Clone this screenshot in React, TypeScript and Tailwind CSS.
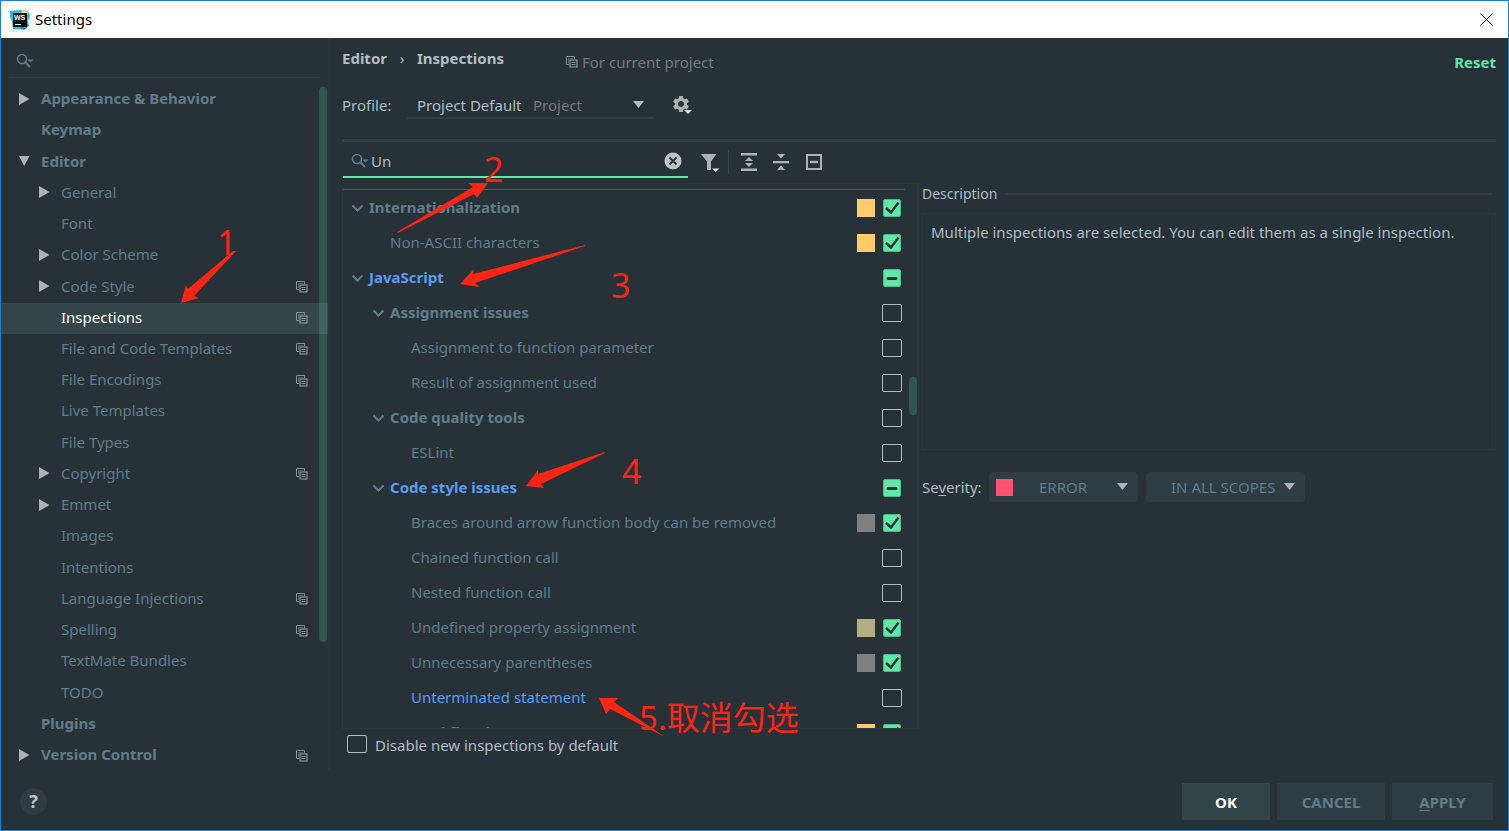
import { MdSettings } from "react-icons/md";

interface TreeItem {
  label: string;
  level: 0 | 1;
  arrow?: "open" | "closed";
  shared?: boolean;
  selected?: boolean;
}

interface Inspection {
  label: string;
  depth: 0 | 1 | 2;
  group?: boolean;
  changed?: boolean;
  swatch?: "warning" | "weak" | "info";
  state: "on" | "off" | "mixed";
}

const tree: TreeItem[] = [
  { label: "Appearance & Behavior", level: 0, arrow: "closed" },
  { label: "Keymap", level: 0 },
  { label: "Editor", level: 0, arrow: "open" },
  { label: "General", level: 1, arrow: "closed" },
  { label: "Font", level: 1 },
  { label: "Color Scheme", level: 1, arrow: "closed" },
  { label: "Code Style", level: 1, arrow: "closed", shared: true },
  { label: "Inspections", level: 1, shared: true, selected: true },
  { label: "File and Code Templates", level: 1, shared: true },
  { label: "File Encodings", level: 1, shared: true },
  { label: "Live Templates", level: 1 },
  { label: "File Types", level: 1 },
  { label: "Copyright", level: 1, arrow: "closed", shared: true },
  { label: "Emmet", level: 1, arrow: "closed" },
  { label: "Images", level: 1 },
  { label: "Intentions", level: 1 },
  { label: "Language Injections", level: 1, shared: true },
  { label: "Spelling", level: 1, shared: true },
  { label: "TextMate Bundles", level: 1 },
  { label: "TODO", level: 1 },
  { label: "Plugins", level: 0 },
  { label: "Version Control", level: 0, arrow: "closed", shared: true },
];

const inspections: Inspection[] = [
  { label: "Internationalization", depth: 0, group: true, swatch: "warning", state: "on" },
  { label: "Non-ASCII characters", depth: 1, swatch: "warning", state: "on" },
  { label: "JavaScript", depth: 0, group: true, changed: true, state: "mixed" },
  { label: "Assignment issues", depth: 1, group: true, state: "off" },
  { label: "Assignment to function parameter", depth: 2, state: "off" },
  { label: "Result of assignment used", depth: 2, state: "off" },
  { label: "Code quality tools", depth: 1, group: true, state: "off" },
  { label: "ESLint", depth: 2, state: "off" },
  { label: "Code style issues", depth: 1, group: true, changed: true, state: "mixed" },
  { label: "Braces around arrow function body can be removed", depth: 2, swatch: "info", state: "on" },
  { label: "Chained function call", depth: 2, state: "off" },
  { label: "Nested function call", depth: 2, state: "off" },
  { label: "Undefined property assignment", depth: 2, swatch: "weak", state: "on" },
  { label: "Unnecessary parentheses", depth: 2, swatch: "info", state: "on" },
  { label: "Unterminated statement", depth: 2, changed: true, state: "off" },
  { label: "Control flow issues", depth: 1, group: true, swatch: "warning", state: "on" },
];

const swatchColors = {
  warning: "bg-[#ffcb6b]",
  weak: "bg-[#b3ae80]",
  info: "bg-[#808080]",
};

const depthPadding = {
  0: "pl-[9px]",
  1: "pl-[30px]",
  2: "pl-[51px]",
};

function WebStormLogo() {
  return (
    <svg className="h-5 w-5" viewBox="0 0 20 20" aria-hidden="true">
      <path d="M0 1l10-1 9 2 1 5-2 4 1 5-5 1-1 3-5-1-5 0-1-7-2-5z" fill="#1cc4e4" />
      <path d="M14 12l5 3-2 3-3 2-4-2z" fill="#1887d2" />
      <path d="M11 3l2-3 6 1-2 4z" fill="#f2e43c" />
      <rect x="3" y="3" width="14" height="14" fill="#0b0f12" />
      <text x="4" y="10" fill="#fff" fontSize="7" fontWeight="700" fontFamily="Liberation Sans, sans-serif">
        WS
      </text>
      <rect x="5" y="14" width="6" height="1" fill="#fff" />
    </svg>
  );
}

function CopyIcon() {
  return (
    <svg className="h-3 w-3 shrink-0" viewBox="0 0 12 12" fill="none" stroke="currentColor" aria-hidden="true">
      <path d="M3 8.500H.5v-8h8V3" />
      <path d="M2.500 7V2.500H7" opacity="0.450" />
      <rect x="4" y="4" width="7" height="7" strokeWidth="1.200" />
      <path d="M5.500 6.500h4M5.500 8.500h4" />
    </svg>
  );
}

function SearchIcon() {
  return (
    <svg className="h-4 w-[18px] shrink-0" viewBox="0 0 18 16" fill="none" aria-hidden="true">
      <circle cx="6" cy="6" r="4.500" stroke="#607d8b" strokeWidth="1.600" />
      <path d="M9.300 9.300l4.700 4.700" stroke="#607d8b" strokeWidth="2" />
      <path d="M11.500 6.500h6l-3 3z" fill="#607d8b" />
    </svg>
  );
}

function DownTriangle() {
  return (
    <svg className="pointer-events-none h-2 w-3 shrink-0" viewBox="0 0 12 8" aria-hidden="true">
      <path d="M0 0h11L5.500 7z" fill="currentColor" />
    </svg>
  );
}

function TreeArrow({ open }: { open: boolean }) {
  return (
    <svg className="h-3 w-3 shrink-0" viewBox="0 0 12 12" fill="#afb1b3" aria-hidden="true">
      {open ? <path d="M0 1h10.500L5.200 11z" /> : <path d="M0 0l10.500 6L0 12z" />}
    </svg>
  );
}

function Checkbox({ id, state }: { id: string; state: Inspection["state"] }) {
  return (
    <span className="grid shrink-0 place-items-center">
      <input
        id={id}
        type="checkbox"
        defaultChecked={state === "on"}
        ref={(el) => {
          if (el) el.indeterminate = state === "mixed";
        }}
        className="col-start-1 row-start-1 h-[18px] w-5 appearance-none rounded-[2px] border border-[#b0bec5] checked:w-[18px] checked:border-[#4fb988] checked:bg-[#5fe9a6] indeterminate:w-[18px] indeterminate:border-[#4fb988] indeterminate:bg-[#5fe9a6]"
      />
      {state !== "off" && (
        <svg
          className="pointer-events-none col-start-1 row-start-1 h-[18px] w-[18px]"
          viewBox="0 0 18 18"
          fill="none"
          stroke="#263238"
          aria-hidden="true"
        >
          {state === "on" ? (
            <path d="M3 9l5 4.500 7.500-10" strokeWidth="2.500" />
          ) : (
            <path d="M5 9.500h8" strokeWidth="3" strokeLinecap="round" />
          )}
        </svg>
      )}
    </span>
  );
}

function Sidebar() {
  return (
    <aside className="relative flex w-[329px] shrink-0 flex-col border-r-2 border-[#2a373e]">
      <label className="ml-2 mr-2 flex h-10 items-center border-b border-[#2e3c43] pl-[7px] pt-[6px]">
        <SearchIcon />
        <input aria-label="Search settings" className="min-w-0 flex-1 bg-transparent outline-none" />
      </label>
      <ul className="mt-[6px] flex min-h-0 flex-1 flex-col">
        {tree.map((item) => (
          <li key={item.label} className="min-h-0 flex-1">
            <button
              type="button"
              className={`flex h-full w-full items-center pr-5 text-left ${
                item.level === 0 ? "pl-[18px] font-bold" : "pl-[38px]"
              } ${item.selected ? "bg-[#35464b] text-white" : "text-[#607d8b]"}`}
            >
              <span className="flex w-[22px] shrink-0 pb-[2px]">
                {item.arrow && <TreeArrow open={item.arrow === "open"} />}
              </span>
              <span className="flex-1 whitespace-nowrap pb-[3px]">{item.label}</span>
              {item.shared && (
                <span className="text-[#87939a]">
                  <CopyIcon />
                </span>
              )}
            </button>
          </li>
        ))}
      </ul>
      <div className="absolute right-px top-[49px] h-[555px] w-2 rounded-full bg-[#5fe9a6]/20" />
    </aside>
  );
}

function Toolbar() {
  return (
    <div className="mb-px flex h-10 shrink-0 items-center text-[#afb1b3]">
      <div className="ml-px flex h-8 w-[345px] items-center border-b-2 border-[#5fe9a6] pl-2 pr-[6px]">
        <SearchIcon />
        <input
          aria-label="Search inspections"
          defaultValue="Un"
          className="min-w-0 flex-1 bg-transparent pl-[2px] text-[#b0bec5] outline-none"
        />
        <button type="button" aria-label="Clear search">
          <svg className="h-[18px] w-[18px]" viewBox="0 0 18 18" aria-hidden="true">
            <circle cx="9" cy="9" r="8.500" fill="#c0c2c3" />
            <path d="M5.500 5.500l7 7m0-7l-7 7" stroke="#263238" strokeWidth="1.800" />
          </svg>
        </button>
      </div>
      <button type="button" aria-label="Filter" className="ml-[13px]">
        <svg className="h-5 w-5" viewBox="0 0 20 20" fill="currentColor" aria-hidden="true">
          <path d="M0 2h15.500L10 9.500V18H6V9.500z" />
          <path d="M11 16.500h7.500L14.700 20z" fill="#e0e0e0" />
        </svg>
      </button>
      <div className="ml-[7px] h-6 w-px bg-[#37474f]" />
      <button type="button" aria-label="Expand all" className="ml-3">
        <svg className="h-[18px] w-4" viewBox="0 0 16 18" fill="currentColor" aria-hidden="true">
          <path d="M0 0h16v2.500H0zM0 15.500h16V18H0zM8 4l4 4H4zM8 14l-4-4h8z" />
        </svg>
      </button>
      <button type="button" aria-label="Collapse all" className="ml-4">
        <svg className="h-[18px] w-4" viewBox="0 0 16 18" fill="currentColor" aria-hidden="true">
          <path d="M0 8h16v2.300H0zM4 1h8L8 5.500zM8 12.500l4 4.500H4z" />
        </svg>
      </button>
      <button type="button" aria-label="Reset to empty" className="ml-[17px]">
        <svg className="h-4 w-4" viewBox="0 0 16 16" fill="none" stroke="currentColor" aria-hidden="true">
          <path d="M1 1h14v14H1z" strokeWidth="2" />
          <path d="M4 8h8" strokeWidth="2.400" />
        </svg>
      </button>
    </div>
  );
}

function InspectionRow({ item }: { item: Inspection }) {
  const id = item.label.toLowerCase().replaceAll(" ", "-");

  return (
    <li className={`flex h-[35px] items-center pr-[15px] ${depthPadding[item.depth]}`}>
      <span className="flex w-[17px] shrink-0">
        {item.group && (
          <svg className="h-3 w-3" viewBox="0 0 12 12" fill="none" stroke="#607d8b" strokeWidth="2" aria-hidden="true">
            <path d="M.5 3.500l5 5 5-5" />
          </svg>
        )}
      </span>
      <label
        htmlFor={id}
        className={`flex-1 whitespace-nowrap pb-[2px] ${item.group ? "font-bold" : ""} ${
          item.changed ? "text-[#589df6]" : "text-[#607d8b]"
        }`}
      >
        {item.label}
      </label>
      {item.swatch && <span className={`mr-[7px] h-[18px] w-[18px] ${swatchColors[item.swatch]}`} />}
      <span className="flex w-5 justify-center">
        <Checkbox id={id} state={item.state} />
      </span>
    </li>
  );
}

function InspectionList() {
  return (
    <div className="relative w-1/2 shrink-0 overflow-hidden border border-r-2 border-[#2a373e]">
      <div className="mr-3 mt-[5px] h-px bg-[#455a64]" />
      <ul>
        {inspections.map((item) => (
          <InspectionRow key={item.label} item={item} />
        ))}
      </ul>
      <div className="absolute right-0 top-[193px] h-[38px] w-2 rounded-full bg-[#5fe9a6]/20" />
    </div>
  );
}

function DetailsPanel() {
  return (
    <section className="flex min-w-0 flex-1 flex-col pl-[3px]">
      <div className="flex h-[22px] items-center gap-2 pr-1">
        <h2 className="text-sm text-[#b0bec5]">Description</h2>
        <div className="h-[2px] flex-1 bg-[#2e3c43]" />
      </div>
      <div className="mt-2 h-[237px] border border-[#2a373e] px-2 py-[7px] text-[#b0bec5]">
        Multiple inspections are selected. You can edit them as a single inspection.
      </div>
      <div className="mt-[22px] flex items-center text-[#607d8b]">
        <label htmlFor="severity" className="w-[67px] text-[#b0bec5]">
          Se<span className="underline underline-offset-2">v</span>erity:
        </label>
        <div className="flex h-[30px] w-[149px] items-center rounded-sm bg-[#2e3c43] pl-[7px] pr-[9px] text-[#afb1b3]">
          <span className="h-[17px] w-[17px] bg-[#ff5370]" />
          <select id="severity" className="ml-[26px] min-w-0 flex-1 appearance-none bg-transparent text-[#607d8b] outline-none">
            <option>ERROR</option>
          </select>
          <DownTriangle />
        </div>
        <div className="ml-2 flex h-[30px] w-[159px] items-center rounded-sm bg-[#2e3c43] pl-[25px] pr-[9px] text-[#afb1b3]">
          <select aria-label="Scope" className="min-w-0 flex-1 appearance-none bg-transparent text-[#607d8b] outline-none">
            <option>IN ALL SCOPES</option>
          </select>
          <DownTriangle />
        </div>
      </div>
    </section>
  );
}

function Footer() {
  return (
    <footer className="flex h-[59px] shrink-0 items-center gap-[7px] pl-[19px] pr-[15px] pt-[2px] font-bold">
      <button
        type="button"
        aria-label="Help"
        className="mr-auto h-[27px] w-[27px] rounded-full bg-[#2e3c43] text-lg leading-[27px] text-[#c0c2c3]"
      >
        ?
      </button>
      <button type="button" className="h-[37px] w-[88px] bg-[#314549] text-white">
        OK
      </button>
      <button type="button" className="h-[37px] w-[108px] bg-[#2e3c43] text-[#607d8b]">
        CANCEL
      </button>
      <button type="button" className="h-[37px] w-[101px] bg-[#2e3c43] text-[#607d8b]">
        <span className="underline underline-offset-2">A</span>PPLY
      </button>
    </footer>
  );
}

// Numbered steps drawn on top of the window
function Annotations() {
  return (
    <div className="pointer-events-none absolute -inset-px font-['Noto_Sans','Noto_Sans_CJK_SC',sans-serif] text-[34px] leading-[34px] text-[#ff2414]">
      <svg className="absolute inset-0 h-full w-full" fill="currentColor" aria-hidden="true">
        <path d="M236 251l-3 0-45 38-2-4-5 18 18-5-5-2z" />
        <path d="M397 232l76-45-5-4 20 0-11 15-3-4-76 39z" />
        <path d="M585 245l-112 29 1-5-14 15 19 3-4-4 110-37z" />
        <path d="M605 452l-67 22 0-4-12 16 18 2-3-4 64-31z" />
        <path d="M665 737l-51-35 4-4-19 0 7 16 4-5z" />
      </svg>
      <span className="absolute left-[217px] top-[225px]">1</span>
      <span className="absolute left-[484px] top-[152px]">2</span>
      <span className="absolute left-[611px] top-[268px]">3</span>
      <span className="absolute left-[622px] top-[454px]">4</span>
      <span className="absolute left-[639px] top-[701px] whitespace-nowrap text-[33px]">5.取消勾选</span>
    </div>
  );
}

export default function App() {
  return (
    <div className="relative flex h-screen flex-col overflow-hidden border border-[#1a80d8] bg-[#263238] font-['Noto_Sans','Noto_Sans_CJK_SC',sans-serif] text-[15px] leading-[22px]">
      <header className="flex h-[37px] shrink-0 items-center bg-white pl-[9px] pr-[15px] text-black">
        <WebStormLogo />
        <h1 className="ml-[5px] flex-1 pb-[2px]">Settings</h1>
        <button type="button" aria-label="Close">
          <svg className="h-[13px] w-[13px]" viewBox="0 0 13 13" stroke="currentColor" aria-hidden="true">
            <path d="M.5.5l12 12M12.500.5l-12 12" />
          </svg>
        </button>
      </header>

      <div className="flex min-h-0 flex-1">
        <Sidebar />

        <main className="flex min-w-0 flex-1 flex-col pl-3 pr-3">
          <div className="flex h-[53px] shrink-0 items-start pt-[9px]">
            <nav aria-label="Breadcrumb" className="flex w-56 font-bold text-[#b0bec5]">
              <a href="#editor">Editor</a>
              <span className="w-[30px] text-center font-normal">›</span>
              <a href="#inspections">Inspections</a>
            </nav>
            <p className="flex items-center gap-1 pt-1 text-[#77797a]">
              <span className="text-[#87939a]">
                <CopyIcon />
              </span>
              For current project
            </p>
            <a href="#reset" className="ml-auto pt-1 font-bold text-[#5fe9a6]">
              Reset
            </a>
          </div>

          <div className="flex h-12 shrink-0 items-start">
            <label htmlFor="profile" className="w-[65px] pt-[3px] text-[#b0bec5]">
              Profile:
            </label>
            <div className="flex h-7 w-[247px] items-center border-b-2 border-[#2e3c43] pl-[10px] pr-[9px] pt-px text-[#b0bec5]">
              <select id="profile" className="w-[116px] appearance-none bg-transparent outline-none">
                <option>Project Default</option>
              </select>
              <span className="flex-1 text-[#77797a]">Project</span>
              <DownTriangle />
            </div>
            <button type="button" aria-label="Profile options" className="ml-[17px] flex items-end pt-[3px] text-[#afb1b3]">
              <MdSettings size={20} />
              <svg className="-ml-[7px] h-1 w-2" viewBox="0 0 8 4" aria-hidden="true">
                <path d="M0 0h8L4 4z" fill="#e0e0e0" />
              </svg>
            </button>
          </div>

          <div className="h-[3px] shrink-0 bg-[#2f3f47]" />
          <Toolbar />

          <div className="flex min-h-0 flex-1">
            <InspectionList />
            <DetailsPanel />
          </div>

          <div className="flex h-[42px] shrink-0 items-start gap-2 pl-[5px] pt-[6px] text-[#b0bec5]">
            <Checkbox id="disable-new" state="off" />
            <label htmlFor="disable-new" className="leading-5">
              Disable new inspections by default
            </label>
          </div>
        </main>
      </div>

      <Footer />
      <Annotations />
    </div>
  );
}
